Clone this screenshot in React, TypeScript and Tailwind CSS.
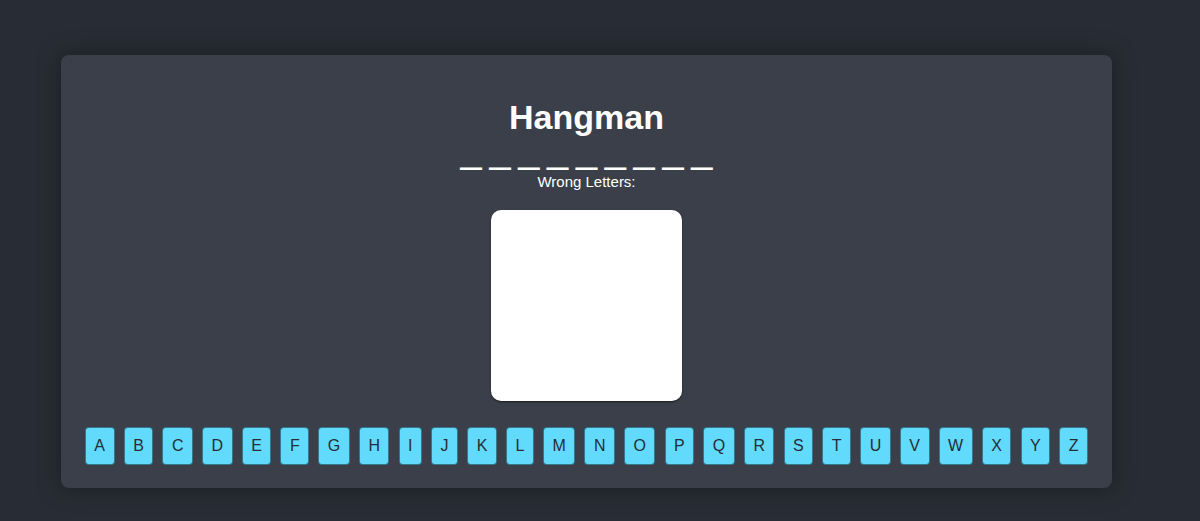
import React from "react";

const LETTERS = "ABCDEFGHIJKLMNOPQRSTUVWXYZ".split("");

export default function App() {
  return (
    <div
      className="w-[1200px] h-[521px] bg-[#282c34] overflow-hidden pt-[55px]"
      style={{ fontFamily: '"Liberation Sans", Arial, sans-serif' }}
    >
      <div className="ml-[61px] w-[1051px] h-[433px] bg-[#3b3f49] rounded-[8px] shadow-[0_0_24px_rgba(0,0,0,0.35)] pt-[46px] flex flex-col items-center text-white">
        <h1 className="text-[34px] font-bold leading-[32px]">Hangman</h1>
        <div className="flex gap-[7.7px] text-[38px] leading-[32px]">
          {Array.from({ length: 9 }).map((_, i) => (
            <span key={i}>_</span>
          ))}
        </div>
        <div className="text-[15px] leading-[17px] mt-[8px]">Wrong Letters:</div>
        <div className="mt-[20px] w-[191px] h-[191px] bg-white rounded-[10px] shadow-[0_1px_2px_rgba(0,0,0,0.6)]"></div>
        <div className="mt-[26px] flex gap-[9.1px] justify-center">
          {LETTERS.map((l) => (
            <button
              key={l}
              className="bg-[#61dafb] text-[#282c34] text-[16px] leading-[18px] px-[8.5px] py-[9px] border border-[rgba(0,0,0,0.45)] rounded-[4px]"
            >
              {l}
            </button>
          ))}
        </div>
      </div>
    </div>
  );
}
